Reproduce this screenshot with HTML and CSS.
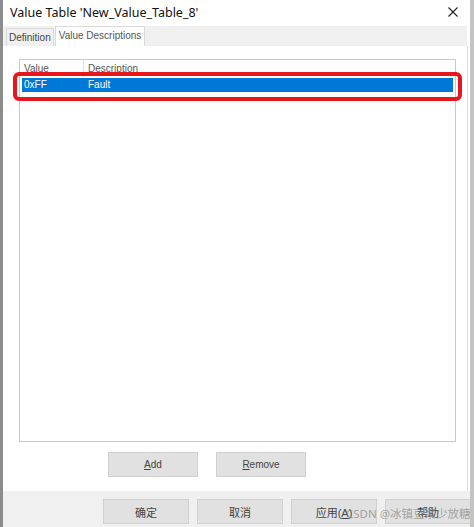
FILE: index.html
```html
<!DOCTYPE html>
<html lang="en">
<head>
<meta charset="UTF-8">
<title>Value Table 'New_Value_Table_8'</title>
<link rel="stylesheet" href="styles.css">
</head>
<body>

<div class="window">
    <div class="titlebar">
        <span class="title">Value Table 'New_Value_Table_8'</span>
        <svg class="close" width="10" height="10" viewBox="0 0 10 10">
            <path d="M0.5 0.5 L9.5 9.5 M9.5 0.5 L0.5 9.5" stroke="#222" stroke-width="1.1" fill="none"/>
        </svg>
    </div>

    <div class="tabs">
        <div class="tab">Definition</div>
        <div class="tab active">Value Descriptions</div>
    </div>

    <div class="panel">
        <div class="listbox">
            <div class="list-header">
                <div class="col-value">Value</div>
                <div class="col-desc">Description</div>
            </div>
            <div class="list-row selected">
                <div class="col-value">0xFF</div>
                <div class="col-desc">Fault</div>
            </div>
        </div>

        <div class="list-buttons">
            <button type="button"><u>A</u>dd</button>
            <button type="button"><u>R</u>emove</button>
        </div>
    </div>

    <div class="footer">
        <button type="button">确定</button>
        <button type="button">取消</button>
        <button type="button">应用(<u>A</u>)</button>
        <button type="button">帮助</button>
    </div>

    <div class="highlight"></div>
    <div class="watermark">CSDN @冰镇豆浆少放糖</div>
</div>

</body>
</html>
```

FILE: styles.css
```css
body {
  margin: 0;
  font-family: "Liberation Sans", "Noto Sans CJK SC", sans-serif;
  font-size: 10px;
  background-color: #ffffff;
}

.window {
  position: relative;
  height: 527px;
  display: flex;
  flex-direction: column;
  border-left: 3px solid #8c8c8c;
  border-right: 4px solid #c4c4c4;
  box-sizing: border-box;
  overflow: hidden;
}

.titlebar {
  height: 26px;
  display: flex;
  align-items: center;
  justify-content: space-between;
  padding: 0 10px 2px 7px;
  box-sizing: border-box;
}

.title {
  font-family: "Noto Sans", "Noto Sans CJK SC", sans-serif;
  font-size: 12.5px;
  color: #111;
}

.close {
  margin-right: 2px;
}

.tabs {
  height: 20px;
  display: flex;
  align-items: flex-end;
  background-color: #f0f0f0;
  padding-left: 3px;
  margin-right: 3px;
}

.tab {
  height: 17px;
  line-height: 17px;
  padding: 0 2px;
  color: #444;
  border: 1px solid #dadada;
  border-bottom: none;
}

.tab.active {
  height: 19px;
  line-height: 17px;
  background-color: #ffffff;
  color: #555;
  margin-left: 1px;
  padding: 0 3px;
}

.panel {
  flex: 1;
  background-color: #ffffff;
  border-right: 1px solid #dcdcdc;
  margin-right: 2px;
  padding: 13px 0 0 16px;
}

.listbox {
  width: 437px;
  height: 383px;
  border: 1px solid #c9c9c9;
  box-sizing: border-box;
  padding: 0 2px 0 2px;
}

.list-header,
.list-row {
  display: flex;
  height: 16px;
  line-height: 16px;
  color: #555;
}

.list-header {
  height: 17px;
  line-height: 18px;
}

.list-header .col-desc {
  border-left: 1px solid #e0e0e0;
}

.col-value {
  width: 59px;
  padding-left: 2px;
}

.col-desc {
  padding-left: 4px;
}

.list-row.selected {
  background-color: #0078d7;
  color: #ffffff;
  height: 14px;
  line-height: 14px;
  margin-top: 1px;
}

.list-row.selected .col-desc {
  padding-left: 5px;
}

.list-buttons {
  display: flex;
  gap: 18px;
  padding: 10px 0 0 89px;
}

button {
  width: 90px;
  height: 25px;
  background-color: #e1e1e1;
  border: 1px solid #d0d0d0;
  font-family: "Liberation Sans", "Noto Sans CJK SC", sans-serif;
  font-size: 10px;
  color: #444;
  padding: 0;
}

.footer {
  height: 36px;
  background-color: #f0f0f0;
  display: flex;
  gap: 8px;
  padding: 8px 0 0 100px;
  box-sizing: border-box;
}

.footer button {
  width: 86px;
  flex-shrink: 0;
  font-size: 11px;
}

.highlight {
  position: absolute;
  left: 10px;
  top: 72px;
  width: 449px;
  height: 29px;
  border: 4px solid #e8161c;
  border-radius: 6px;
  box-sizing: border-box;
}

.watermark {
  position: absolute;
  left: 343px;
  top: 505px;
  font-family: "Noto Sans", "Noto Sans CJK SC", sans-serif;
  font-size: 11.5px;
  color: rgba(130, 130, 130, 0.7);
  white-space: nowrap;
}
```
